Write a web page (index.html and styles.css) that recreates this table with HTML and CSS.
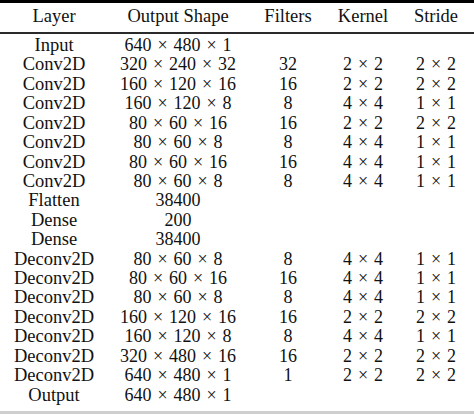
FILE: index.html
```html
<!DOCTYPE html>
<html>
<head>
<meta charset="utf-8">
<link rel="stylesheet" href="styles.css">
</head>
<body>
<div class="arch">
  <div class="head grid">
    <div>Layer</div><div>Output Shape</div><div>Filters</div><div>Kernel</div><div>Stride</div>
  </div>
  <div class="body grid">
    <div>Input</div><div class="m">640<span class="x">×</span>480<span class="x">×</span>1</div><div></div><div></div><div></div>
    <div>Conv2D</div><div class="m">320<span class="x">×</span>240<span class="x">×</span>32</div><div class="m">32</div><div class="m">2<span class="x">×</span>2</div><div class="m">2<span class="x">×</span>2</div>
    <div>Conv2D</div><div class="m">160<span class="x">×</span>120<span class="x">×</span>16</div><div class="m">16</div><div class="m">2<span class="x">×</span>2</div><div class="m">2<span class="x">×</span>2</div>
    <div>Conv2D</div><div class="m">160<span class="x">×</span>120<span class="x">×</span>8</div><div class="m">8</div><div class="m">4<span class="x">×</span>4</div><div class="m">1<span class="x">×</span>1</div>
    <div>Conv2D</div><div class="m">80<span class="x">×</span>60<span class="x">×</span>16</div><div class="m">16</div><div class="m">2<span class="x">×</span>2</div><div class="m">2<span class="x">×</span>2</div>
    <div>Conv2D</div><div class="m">80<span class="x">×</span>60<span class="x">×</span>8</div><div class="m">8</div><div class="m">4<span class="x">×</span>4</div><div class="m">1<span class="x">×</span>1</div>
    <div>Conv2D</div><div class="m">80<span class="x">×</span>60<span class="x">×</span>16</div><div class="m">16</div><div class="m">4<span class="x">×</span>4</div><div class="m">1<span class="x">×</span>1</div>
    <div>Conv2D</div><div class="m">80<span class="x">×</span>60<span class="x">×</span>8</div><div class="m">8</div><div class="m">4<span class="x">×</span>4</div><div class="m">1<span class="x">×</span>1</div>
    <div>Flatten</div><div class="m">38400</div><div></div><div></div><div></div>
    <div>Dense</div><div class="m">200</div><div></div><div></div><div></div>
    <div>Dense</div><div class="m">38400</div><div></div><div></div><div></div>
    <div>Deconv2D</div><div class="m">80<span class="x">×</span>60<span class="x">×</span>8</div><div class="m">8</div><div class="m">4<span class="x">×</span>4</div><div class="m">1<span class="x">×</span>1</div>
    <div>Deconv2D</div><div class="m">80<span class="x">×</span>60<span class="x">×</span>16</div><div class="m">16</div><div class="m">4<span class="x">×</span>4</div><div class="m">1<span class="x">×</span>1</div>
    <div>Deconv2D</div><div class="m">80<span class="x">×</span>60<span class="x">×</span>8</div><div class="m">8</div><div class="m">4<span class="x">×</span>4</div><div class="m">1<span class="x">×</span>1</div>
    <div>Deconv2D</div><div class="m">160<span class="x">×</span>120<span class="x">×</span>16</div><div class="m">16</div><div class="m">2<span class="x">×</span>2</div><div class="m">2<span class="x">×</span>2</div>
    <div>Deconv2D</div><div class="m">160<span class="x">×</span>120<span class="x">×</span>8</div><div class="m">8</div><div class="m">4<span class="x">×</span>4</div><div class="m">1<span class="x">×</span>1</div>
    <div>Deconv2D</div><div class="m">320<span class="x">×</span>480<span class="x">×</span>16</div><div class="m">16</div><div class="m">2<span class="x">×</span>2</div><div class="m">2<span class="x">×</span>2</div>
    <div>Deconv2D</div><div class="m">640<span class="x">×</span>480<span class="x">×</span>1</div><div class="m">1</div><div class="m">2<span class="x">×</span>2</div><div class="m">2<span class="x">×</span>2</div>
    <div>Output</div><div class="m">640<span class="x">×</span>480<span class="x">×</span>1</div><div></div><div></div><div></div>
  </div>
</div>
</body>
</html>
```
FILE: styles.css
```css
html, body {
  margin: 0;
  padding: 0;
  background: #ffffff;
}
body {
  width: 474px;
  height: 414px;
  overflow: hidden;
}
.arch {
  width: 474px;
  font-family: "Liberation Serif", serif;
  font-size: 18.5px;
  color: #111;
  border-top: 3px solid #000;
  border-bottom: 3px solid #cfcfcf;
}
.grid {
  display: grid;
  grid-template-columns: 108px 140px 80px 70px 76px;
  grid-auto-rows: 19.43px;
}
.grid > div {
  text-align: center;
  white-space: nowrap;
  line-height: 19.43px;
}
.head {
  padding-top: 3.75px;
  padding-bottom: 5.8px;
  border-bottom: 2px solid #2a2a2a;
}
.body {
  padding-top: 2px;
  padding-bottom: 6px;
}
.m { font-size: 18px; }
.x { margin: 0 0.33em; }
```
